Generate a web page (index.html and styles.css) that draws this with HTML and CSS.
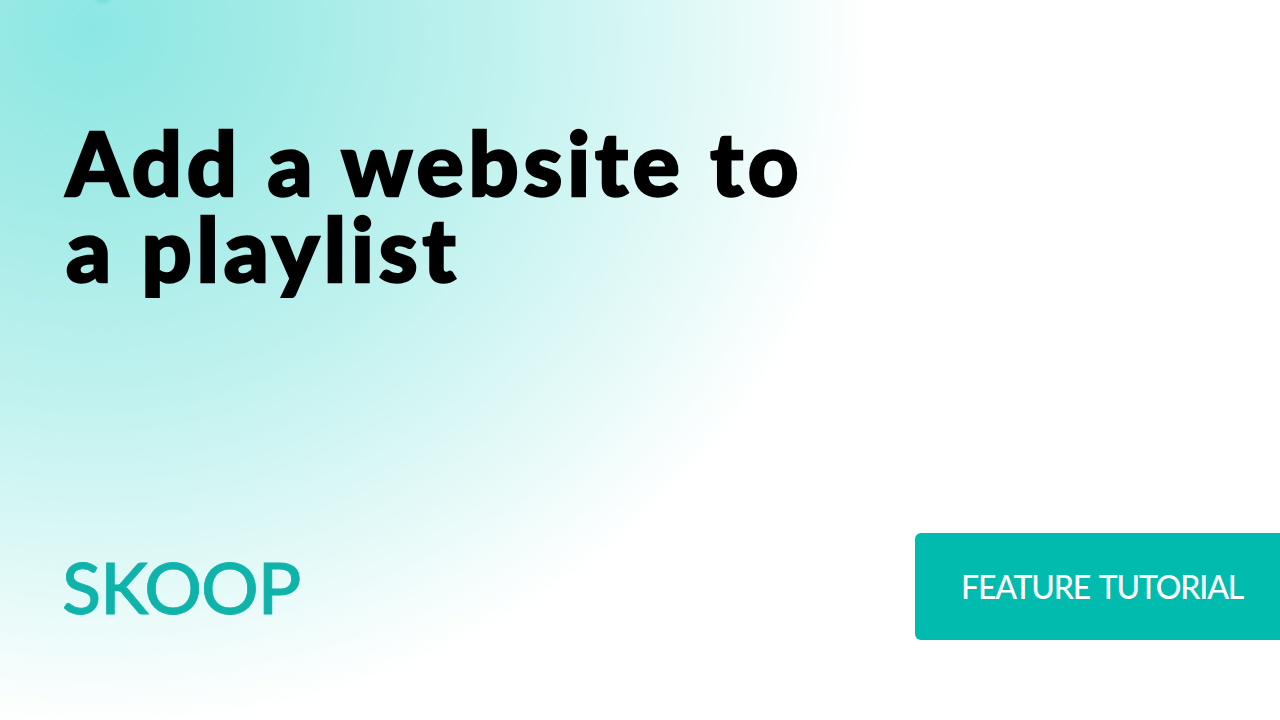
FILE: index.html
```html
<!DOCTYPE html>
<html lang="en">
<head>
<meta charset="utf-8">
<title>Add a website to a playlist</title>
<link rel="stylesheet" href="styles.css">
</head>
<body>
<main class="slide">
  <h1 class="title">Add a website to<br>a playlist</h1>
  <footer class="bottom">
    <div class="logo">SKOOP</div>
    <div class="tag">FEATURE TUTORIAL</div>
  </footer>
</main>
</body>
</html>
```
FILE: styles.css
```css
html, body { margin: 0; padding: 0; }
body { width: 1280px; height: 720px; overflow: hidden; background: #fff; }
.slide {
  width: 1280px; height: 720px; box-sizing: border-box;
  display: flex; flex-direction: column; justify-content: space-between;
  padding: 119px 0 80px 66px;
  background:
    radial-gradient(circle 13px at 103px -7px, #55d5cc 0%, rgba(85, 213, 204, 0) 100%),
    radial-gradient(ellipse 785px 700px at 90px 30px, #8ce7e3 0%, #a3ebe7 25%, #c1f2ef 53%, #ddf8f6 75%, #f4fdfc 92%, #ffffff 100%);
  font-family: "Lato", "Liberation Sans", sans-serif;
}
.title { margin: 0; font-size: 88px; line-height: 86px; font-weight: 900; color: #000; letter-spacing: 4.8px; -webkit-text-stroke: 2.4px #000; }
.bottom { display: flex; justify-content: space-between; align-items: center; margin-left: -4px; }
.logo { font-size: 72px; line-height: 107px; font-weight: 500; color: #10b3aa; letter-spacing: -1px; -webkit-text-stroke: 0.8px #10b3aa; }
.tag { width: 365px; height: 107px; box-sizing: border-box; display: flex; align-items: center; padding-left: 46px; background: #00bbae; border-radius: 6px 0 0 6px; color: #fff; font-size: 32px; font-weight: 500; letter-spacing: -1.2px; word-spacing: 3px; }
```
